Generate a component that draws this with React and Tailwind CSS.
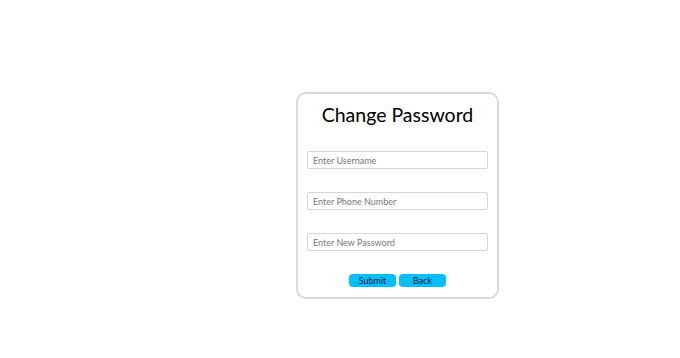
import React from 'react';

const App = () => {
  return (
    <div className="min-h-[358px] w-[680px] bg-white pt-[92px] pl-[296px]" style={{ fontFamily: 'Lato, "Open Sans", sans-serif' }}>
      <div className="w-[203px] rounded-[10px] border-2 border-[#d9d9d9] px-[9px] pt-[7px] pb-[10px]">
        <h1 className="text-center text-[19.5px] leading-[27px] text-black">Change Password</h1>

        <form className="mt-[23px] flex flex-col gap-[23px]" onSubmit={(e) => e.preventDefault()}>
          <input
            type="text"
            placeholder="Enter Username"
            className="h-[18px] w-full rounded-[2px] border border-[#d6d6d6] px-[5px] text-[9px] placeholder:text-[#777] outline-none"
          />
          <input
            type="text"
            placeholder="Enter Phone Number"
            className="h-[18px] w-full rounded-[2px] border border-[#d6d6d6] px-[5px] text-[9px] placeholder:text-[#777] outline-none"
          />
          <input
            type="password"
            placeholder="Enter New Password"
            className="h-[18px] w-full rounded-[2px] border border-[#d6d6d6] px-[5px] text-[9px] placeholder:text-[#777] outline-none"
          />

          <div className="flex justify-center gap-[3px]">
            <button type="submit" className="h-[13px] w-[47px] rounded-[4px] bg-[#00bfff] text-[9px] leading-[13px] text-[#1a1a2e]">
              Submit
            </button>
            <button type="button" className="h-[13px] w-[47px] rounded-[4px] bg-[#00bfff] text-[9px] leading-[13px] text-[#1a1a2e]">
              Back
            </button>
          </div>
        </form>
      </div>
    </div>
  );
};

export default App;
